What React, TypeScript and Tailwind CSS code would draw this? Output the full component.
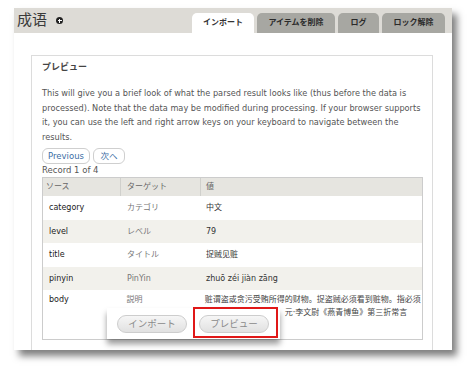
import React from "react"

const jp = "font-['DejaVu_Sans','Noto_Sans_CJK_JP',sans-serif]"
const sc = "font-['DejaVu_Sans','Noto_Sans_CJK_SC',sans-serif]"

const tabs = [
    { label: "インポート", w: "w-[62px]", active: true },
    { label: "アイテムを削除", w: "w-[78px]", active: false },
    { label: "ログ", w: "w-[41px]", active: false },
    { label: "ロック解除", w: "w-[63px]", active: false },
]

const rows = [
    { src: "category", target: "カテゴリ", value: "中文" },
    { src: "level", target: "レベル", value: "79" },
    { src: "title", target: "タイトル", value: "捉贼见赃" },
    { src: "pinyin", target: "PinYin", value: "zhuō zéi jiàn zāng" },
]

export default function App() {
    return (
        <div className={`relative w-[474px] h-[368px] overflow-hidden bg-white ${jp}`}>
            {/* window */}
            <div className="ml-[14px] mt-[8px] w-[438px] h-[342px] bg-white shadow-[5px_6px_7px_rgba(0,0,0,0.5)] overflow-hidden">
                {/* header bar */}
                <div className="flex h-[25px] items-end justify-between bg-[#dddbd6] pr-[7px]">
                    <div className="flex items-center gap-[9px] self-center pl-[3px]">
                        <span className={`text-[15px] leading-none text-[#3a3a3a] ${sc}`}>成语</span>
                        <span className="relative flex h-[7px] w-[7px] items-center justify-center rounded-full bg-[#222]">
                            <span className="absolute h-[1px] w-[4px] bg-white" />
                            <span className="absolute h-[4px] w-[1px] bg-white" />
                        </span>
                    </div>
                    <div className="flex gap-[3px]">
                        {tabs.map((t) => (
                            <div
                                key={t.label}
                                className={`flex h-[20px] ${t.w} items-center justify-center rounded-t-[5px] text-[8px] font-bold ${t.active ? "bg-white text-[#333]" : "bg-[#a7a7a2] text-[#2a2a2a]"}`}
                            >
                                {t.label}
                            </div>
                        ))}
                    </div>
                </div>

                {/* content */}
                <div className="pl-[17px] pt-[22px]">
                    <div className="w-[402px] h-[320px] border border-[#dcdcdc] pl-[10px] pr-[9px] pt-[5px]">
                        <div className="text-[9px] leading-[12px] font-bold text-[#444]">プレビュー</div>
                        <p className="mt-[13px] text-[8.2px] leading-[14.6px] text-[#555]">
                            This will give you a brief look of what the parsed result looks like (thus before the data is processed). Note that the data may be modified during processing. If your browser supports it, you can use the left and right arrow keys on your keyboard to navigate between the results.
                        </p>
                        <div className="mt-[4px] flex gap-[3px]">
                            <button className="h-[16px] w-[48px] rounded-[6px] border border-[#cfcfcf] bg-white text-[8.5px] leading-none text-[#3b6ea5]">
                                Previous
                            </button>
                            <button className="h-[16px] w-[32px] rounded-[6px] border border-[#cfcfcf] bg-white text-[8.5px] leading-none text-[#3b6ea5]">
                                次へ
                            </button>
                        </div>
                        <div className="text-[8.5px] leading-[13px] text-[#555]">Record 1 of 4</div>
                        <div className="w-[381px] border border-[#cccccc]">
                            <div className="flex h-[18px] items-center bg-[#e6e5e0] text-[8px] text-[#666]">
                                <div className="w-[78px] border-r border-[#d0d0cc] pl-[3px] leading-[18px]">ソース</div>
                                <div className="w-[80px] border-r border-[#d0d0cc] pl-[6px] leading-[18px]">ターゲット</div>
                                <div className="pl-[5px]">値</div>
                            </div>
                            {rows.map((r, i) => (
                                <div
                                    key={r.src}
                                    className={`flex h-[23.5px] items-center text-[8px] ${i % 2 === 1 ? "bg-[#f2f1ec]" : "bg-white"}`}
                                >
                                    <div className="w-[78px] pl-[6px] text-[#222]">{r.src}</div>
                                    <div className="w-[80px] pl-[6px] text-[#777]">{r.target}</div>
                                    <div className={`pl-[5px] text-[#333] ${sc}`}>{r.value}</div>
                                </div>
                            ))}
                            <div className="flex h-[49px] items-start bg-white pt-[3px] text-[8px]">
                                <div className="w-[78px] pl-[6px] leading-[13px] text-[#222]">body</div>
                                <div className="w-[80px] pl-[6px] leading-[13px] text-[#777]">説明</div>
                                <div className={`w-[224px] pl-[5px] leading-[13px] text-[#444] ${sc}`}>
                                    赃谓盗或贪污受贿所得的财物。捉盗贼必须看到赃物。指必须抓住真凭实据。出处：元·李文尉《燕青博鱼》第三折常言
                                </div>
                            </div>
                        </div>
                    </div>
                </div>
            </div>

            {/* floating action bar */}
            <div className="absolute left-[107px] top-[308px] flex h-[31px] w-[173px] items-center gap-[12px] bg-white pl-[10px] shadow-[0_5px_6px_rgba(0,0,0,0.4)]">
                <button className="h-[18px] w-[70px] rounded-full border border-[#cdcdcd] bg-gradient-to-b from-[#f6f6f6] to-[#e1e1e1] text-[9.5px] leading-none text-[#8a8a8a]">
                    インポート
                </button>
                <button className="h-[18px] w-[70px] rounded-full border border-[#cdcdcd] bg-gradient-to-b from-[#f6f6f6] to-[#e1e1e1] text-[9.5px] leading-none text-[#8a8a8a]">
                    プレビュー
                </button>
            </div>
            <div className="absolute left-[193px] top-[307px] h-[31px] w-[85px] border-2 border-[#e01818]" />
        </div>
    )
}
